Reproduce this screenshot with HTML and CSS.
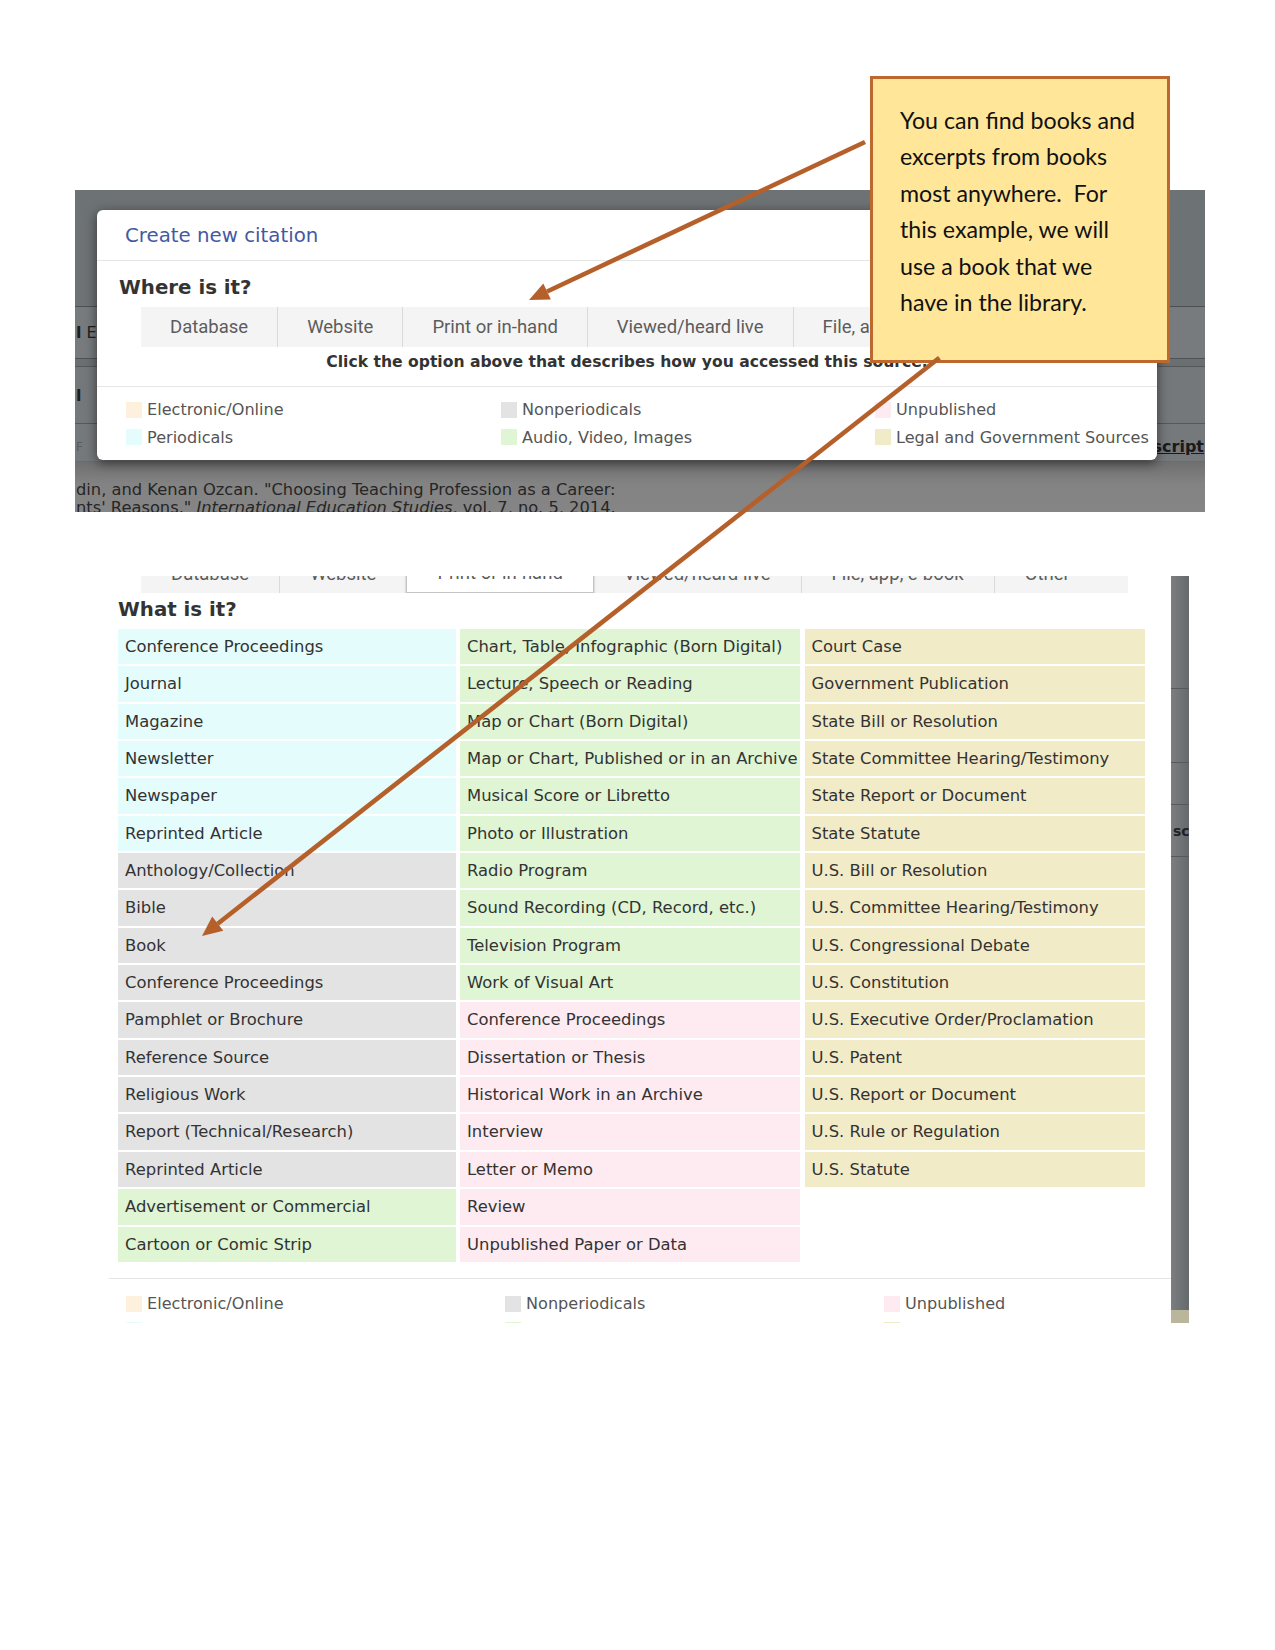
FILE: index.html
```html
<!DOCTYPE html>
<html lang="en">
<head>
<meta charset="utf-8">
<title>Create new citation</title>
<link rel="stylesheet" href="styles.css">
</head>
<body>
<div class="page">

  <section class="shot1">
    <div class="bgpage">
      <div class="bgrow r1"></div>
      <div class="bgrow r2"><span class="lt"><b>l</b> Er</span><span></span></div>
      <div class="bgrow r3"></div>
      <div class="bgrow r4"><span class="lt"><b>l</b></span><span></span></div>
      <div class="bgrow r5"><span class="lt faint">F</span><span class="rt">script</span></div>
      <div class="bgrow r6">
        <p>din, and Kenan Ozcan. "Choosing Teaching Profession as a Career:</p>
        <p>nts' Reasons." <i>International Education Studies</i>, vol. 7, no. 5, 2014.</p>
      </div>
    </div>

    <div class="modal">
      <div class="mhead">Create new citation</div>
      <h2 class="sect">Where is it?</h2>
      <div class="tabs">
        <span class="tab">Database</span>
        <span class="tab">Website</span>
        <span class="tab">Print or in-hand</span>
        <span class="tab">Viewed/heard live</span>
        <span class="tab">File, app, e-book</span>
        <span class="tab">Other</span>
      </div>
      <p class="hint">Click the option above that describes how you accessed this source.</p>
      <div class="legend">
        <span class="lg"><i class="sw c-el"></i>Electronic/Online</span>
        <span class="lg"><i class="sw c-np"></i>Nonperiodicals</span>
        <span class="lg"><i class="sw c-un"></i>Unpublished</span>
        <span class="lg"><i class="sw c-pe"></i>Periodicals</span>
        <span class="lg"><i class="sw c-av"></i>Audio, Video, Images</span>
        <span class="lg"><i class="sw c-lg"></i>Legal and Government Sources</span>
      </div>
    </div>
  </section>

  <section class="shot2">
    <div class="modal2">
      <div class="tabclip">
        <div class="tabs tabs2">
          <span class="tab">Database</span>
          <span class="tab">Website</span>
          <span class="tab active">Print or in-hand</span>
          <span class="tab">Viewed/heard live</span>
          <span class="tab">File, app, e-book</span>
          <span class="tab last">Other</span>
        </div>
      </div>
      <h2 class="sect sect2">What is it?</h2>
      <div class="grid">
        <div class="cell c-pe">Conference Proceedings</div>
        <div class="cell c-pe">Journal</div>
        <div class="cell c-pe">Magazine</div>
        <div class="cell c-pe">Newsletter</div>
        <div class="cell c-pe">Newspaper</div>
        <div class="cell c-pe">Reprinted Article</div>
        <div class="cell c-np">Anthology/Collection</div>
        <div class="cell c-np">Bible</div>
        <div class="cell c-np">Book</div>
        <div class="cell c-np">Conference Proceedings</div>
        <div class="cell c-np">Pamphlet or Brochure</div>
        <div class="cell c-np">Reference Source</div>
        <div class="cell c-np">Religious Work</div>
        <div class="cell c-np">Report (Technical/Research)</div>
        <div class="cell c-np">Reprinted Article</div>
        <div class="cell c-av">Advertisement or Commercial</div>
        <div class="cell c-av">Cartoon or Comic Strip</div>

        <div class="cell c-av">Chart, Table, Infographic (Born Digital)</div>
        <div class="cell c-av">Lecture, Speech or Reading</div>
        <div class="cell c-av">Map or Chart (Born Digital)</div>
        <div class="cell c-av">Map or Chart, Published or in an Archive</div>
        <div class="cell c-av">Musical Score or Libretto</div>
        <div class="cell c-av">Photo or Illustration</div>
        <div class="cell c-av">Radio Program</div>
        <div class="cell c-av">Sound Recording (CD, Record, etc.)</div>
        <div class="cell c-av">Television Program</div>
        <div class="cell c-av">Work of Visual Art</div>
        <div class="cell c-un">Conference Proceedings</div>
        <div class="cell c-un">Dissertation or Thesis</div>
        <div class="cell c-un">Historical Work in an Archive</div>
        <div class="cell c-un">Interview</div>
        <div class="cell c-un">Letter or Memo</div>
        <div class="cell c-un">Review</div>
        <div class="cell c-un">Unpublished Paper or Data</div>

        <div class="cell c-lg">Court Case</div>
        <div class="cell c-lg">Government Publication</div>
        <div class="cell c-lg">State Bill or Resolution</div>
        <div class="cell c-lg">State Committee Hearing/Testimony</div>
        <div class="cell c-lg">State Report or Document</div>
        <div class="cell c-lg">State Statute</div>
        <div class="cell c-lg">U.S. Bill or Resolution</div>
        <div class="cell c-lg">U.S. Committee Hearing/Testimony</div>
        <div class="cell c-lg">U.S. Congressional Debate</div>
        <div class="cell c-lg">U.S. Constitution</div>
        <div class="cell c-lg">U.S. Executive Order/Proclamation</div>
        <div class="cell c-lg">U.S. Patent</div>
        <div class="cell c-lg">U.S. Report or Document</div>
        <div class="cell c-lg">U.S. Rule or Regulation</div>
        <div class="cell c-lg">U.S. Statute</div>
      </div>
      <div class="legend legend2">
        <span class="lg"><i class="sw c-el"></i>Electronic/Online</span>
        <span class="lg"><i class="sw c-np"></i>Nonperiodicals</span>
        <span class="lg"><i class="sw c-un"></i>Unpublished</span>
        <span class="lg"><i class="sw c-pe"></i>Periodicals</span>
        <span class="lg"><i class="sw c-av"></i>Audio, Video, Images</span>
        <span class="lg"><i class="sw c-lg"></i>Legal and Government Sources</span>
      </div>
    </div>
    <div class="gbar">
      <div class="gb gb1"></div>
      <div class="gb gb2"></div>
      <div class="gb gb3"></div>
      <div class="gb gb4"><span>scı</span></div>
      <div class="gb gb5"></div>
      <div class="gb gb6"></div>
    </div>
  </section>

  <div class="callout">
    <p>You can find books and<br>excerpts from books<br>most anywhere.&nbsp; For<br>this example, we will<br>use a book that we<br>have in the library.</p>
  </div>

  <svg class="arrows" width="1275" height="1650" viewBox="0 0 1275 1650" aria-hidden="true">
    <line x1="865" y1="142" x2="547.1" y2="291.5" stroke="#b5602a" stroke-width="4.6"/>
    <polygon points="529,300 550.9,299.6 543.3,283.4" fill="#b5602a"/>
    <line x1="939.4" y1="357.7" x2="217.7" y2="923.7" stroke="#b5602a" stroke-width="4.6"/>
    <polygon points="202,936 223.3,930.7 212.2,916.6" fill="#b5602a"/>
  </svg>
</div>
</body>
</html>
```

FILE: styles.css
```css
* { box-sizing: border-box; }
html, body { margin: 0; padding: 0; background: #fff; }
body { font-family: "DejaVu Sans", Verdana, sans-serif; color: #333; }

.page {
  position: relative;
  width: 1275px;
  height: 1650px;
  overflow: hidden;
  padding-top: 190px;
}

/* ---------- first screenshot ---------- */
.shot1 {
  position: relative;
  margin-left: 75px;
  width: 1130px;
  height: 322px;
  overflow: hidden;
  background: #6d7275;
}
.bgpage { display: flex; flex-direction: column; height: 100%; }
.bgrow {
  flex-shrink: 0;
  display: flex;
  justify-content: space-between;
  align-items: center;
  font-size: 16px;
  color: #1e1e1e;
}
.r1 { height: 117px; border-bottom: 1px solid #4c5053; }
.r2 { height: 52px; background: #777b7e; border-bottom: 1px solid #4f5356; }
.r3 { height: 8px; background: #6b6f72; border-bottom: 1px solid #54585b; }
.r4 { height: 57px; background: #74787b; border-bottom: 1px solid #55595c; }
.r5 { height: 38px; padding-top: 8px; background: #76797c; border-bottom: 1px solid #6a6d70; }
.r6 {
  flex: 1 1 auto;
  min-height: 0;
  overflow: hidden;
  display: block;
  background: linear-gradient(180deg, #6f6f6f 0, #838383 22px, #858585 100%);
  padding-top: 19px;
  font-size: 16.3px;
  color: #262626;
}
.r6 p { margin: 0 0 0 1px; line-height: 18px; white-space: nowrap; }
.lt { padding-left: 1px; color: #1e1e1e; }
.lt b { font-weight: 700; }
.faint { color: #5a5d60; font-size: 12px; }
.rt { font-weight: 700; text-decoration: underline; color: #1a1a1a; padding-right: 1px; }

.modal {
  position: absolute;
  left: 22px;
  top: 20px;
  width: 1060px;
  height: 250px;
  background: #fff;
  border-radius: 6px;
  box-shadow: 0 3px 12px rgba(0, 0, 0, 0.55);
  overflow: hidden;
}
.mhead {
  height: 51px;
  border-bottom: 1px solid #e5e5e5;
  padding-left: 28px;
  display: flex;
  align-items: center;
  font-size: 19.8px;
  color: #4459a3;
}
.sect {
  margin: 15px 0 0;
  padding-left: 22px;
  font-size: 19.8px;
  line-height: 24px;
  font-weight: 700;
  color: #333;
}
.tabs {
  display: flex;
  width: max-content;
  margin: 7px 0 0 44px;
  height: 40px;
  background: #f4f4f4;
  font-family: Roboto, "Liberation Sans", sans-serif;
  font-size: 18.5px;
  color: #5c5c5c;
}
.tab {
  display: flex;
  align-items: center;
  padding: 0 29px;
  border-left: 1px solid #dadada;
  white-space: nowrap;
}
.tab:first-child { border-left: none; }
.hint {
  margin: 5px 0 0;
  text-align: center;
  font-size: 15.6px;
  line-height: 20px;
  font-weight: 700;
  color: #333;
}
.legend {
  display: grid;
  grid-template-columns: 375px 374px 300px;
  grid-auto-rows: 27.5px;
  margin-top: 14px;
  border-top: 1px solid #e5e5e5;
  padding: 9px 0 0 29px;
  font-size: 16.1px;
  color: #555;
}
.lg { display: flex; align-items: center; white-space: nowrap; }
.sw { display: inline-block; width: 16px; height: 16px; margin-right: 5px; }

.c-el { background: #fdf0dc; }
.c-pe { background: #e5fcfc; }
.c-np { background: #e3e3e3; }
.c-av { background: #dff5d4; }
.c-un { background: #fdebf1; }
.c-lg { background: #f2ebc8; }

/* ---------- second screenshot ---------- */
.shot2 {
  display: flex;
  margin: 64px 0 0 109px;
  width: 1080px;
  height: 747px;
  overflow: hidden;
}
.modal2 {
  width: 1062px;
  background: #fff;
}
.tabclip {
  height: 17px;
  overflow: hidden;
  padding-left: 32px;
}
.tabs2 { margin: -22px 0 0 0; }
.tabs2 .tab { padding: 0 30px; }
.tabs2 .tab.last { padding: 0 58px 0 30px; }
.tabs2 .tab.active {
  background: #fff;
  border: 1px solid #c4c4c4;
  border-top: none;
  box-shadow: 0 1px 2px rgba(0, 0, 0, 0.3);
  height: 39px;
}
.tabs2 .tab.active + .tab { border-left: none; }
.sect2 { margin-top: 5px; padding-left: 9px; }

.grid {
  display: grid;
  grid-template-columns: 337.5px 340px 340px;
  grid-template-rows: repeat(17, 35.35px);
  grid-auto-flow: column;
  column-gap: 4.5px;
  row-gap: 2px;
  margin: 7px 0 0 9px;
}
.cell {
  padding-left: 7px;
  font-size: 16.4px;
  line-height: 35.35px;
  color: #333;
  white-space: nowrap;
}
.legend2 {
  grid-template-columns: 379px 379px 300px;
  grid-auto-rows: 26px;
  margin-top: 16px;
  padding: 12px 0 0 17px;
}

.gbar {
  width: 18px;
  display: flex;
  flex-direction: column;
  background: linear-gradient(90deg, #7c7f82, #66696c);
}
.gb { border-bottom: 1px solid #565a5d; }
.gb1 { height: 113px; }
.gb2 { height: 74px; }
.gb3 { height: 42px; }
.gb4 { height: 52px; font-size: 14px; font-weight: 700; color: #222; display: flex; align-items: center; }
.gb4 span { margin-left: 2px; }
.gb5 { flex: 1; border-bottom: none; }
.gb6 { height: 13px; background: #bab69b; border-bottom: none; }

/* ---------- annotation ---------- */
.callout {
  position: absolute;
  left: 870px;
  top: 76px;
  width: 300px;
  height: 287px;
  background: #ffe699;
  border: 3px solid #bd692e;
  padding: 23px 8px 0 27px;
}
.callout p {
  margin: 0;
  font-family: Lato, "Open Sans", sans-serif;
  font-size: 23.2px;
  line-height: 36.4px;
  color: #111;
  white-space: nowrap;
}
.arrows {
  position: absolute;
  left: 0;
  top: 0;
  pointer-events: none;
}
```
